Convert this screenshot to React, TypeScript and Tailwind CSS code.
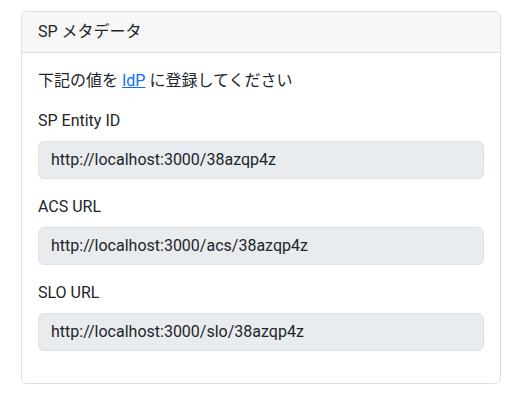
import React from "react";

const font = {
  fontFamily: 'Roboto, "Noto Sans CJK JP", sans-serif',
};

function Field({ label, value }: { label: string; value: string }) {
  return (
    <div className="mb-4">
      <div className="mb-2 text-[16px] leading-6 text-[#212529]">{label}</div>
      <div className="h-[38px] rounded-[6px] border border-[#dee2e6] bg-[#e9ecef] px-3 py-[6px] text-[16px] leading-6 text-[#212529]">
        {value}
      </div>
    </div>
  );
}

export default function App() {
  return (
    <div className="bg-white pt-[11px] pl-[21px]" style={font}>
      <div className="w-[480px] overflow-hidden rounded-[6px] border border-[#dfdfdf] bg-white">
        <div className="border-b border-[#dfdfdf] bg-[#f7f7f7] px-4 py-2 text-[16px] leading-6 text-[#212529]">
          SP メタデータ
        </div>
        <div className="p-4">
          <p className="mb-4 text-[16px] leading-6 text-[#212529]">
            下記の値を{" "}
            <a href="#" className="text-[#0d6efd] underline">
              IdP
            </a>{" "}
            に登録してください
          </p>
          <Field label="SP Entity ID" value="http://localhost:3000/38azqp4z" />
          <Field label="ACS URL" value="http://localhost:3000/acs/38azqp4z" />
          <Field label="SLO URL" value="http://localhost:3000/slo/38azqp4z" />
        </div>
      </div>
    </div>
  );
}
